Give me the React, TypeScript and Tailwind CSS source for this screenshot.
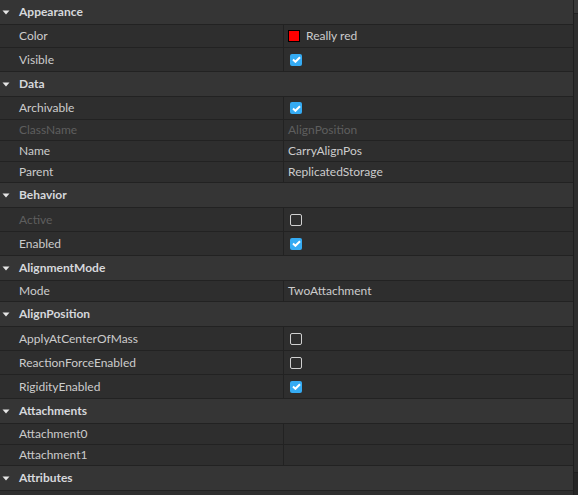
import React from 'react';

type Row =
  | { kind: 'header'; label: string }
  | { kind: 'check'; label: string; checked: boolean; disabled?: boolean; compact?: boolean }
  | { kind: 'text'; label: string; value: string; disabled?: boolean }
  | { kind: 'color'; label: string; value: string; swatch: string };

const rows: Row[] = [
  { kind: 'header', label: 'Appearance' },
  { kind: 'color', label: 'Color', value: 'Really red', swatch: '#ff0000' },
  { kind: 'check', label: 'Visible', checked: true },
  { kind: 'header', label: 'Data' },
  { kind: 'check', label: 'Archivable', checked: true, compact: true },
  { kind: 'text', label: 'ClassName', value: 'AlignPosition', disabled: true },
  { kind: 'text', label: 'Name', value: 'CarryAlignPos' },
  { kind: 'text', label: 'Parent', value: 'ReplicatedStorage' },
  { kind: 'header', label: 'Behavior' },
  { kind: 'check', label: 'Active', checked: false, disabled: true },
  { kind: 'check', label: 'Enabled', checked: true },
  { kind: 'header', label: 'AlignmentMode' },
  { kind: 'text', label: 'Mode', value: 'TwoAttachment' },
  { kind: 'header', label: 'AlignPosition' },
  { kind: 'check', label: 'ApplyAtCenterOfMass', checked: false },
  { kind: 'check', label: 'ReactionForceEnabled', checked: false },
  { kind: 'check', label: 'RigidityEnabled', checked: true },
  { kind: 'header', label: 'Attachments' },
  { kind: 'text', label: 'Attachment0', value: '' },
  { kind: 'text', label: 'Attachment1', value: '' },
  { kind: 'header', label: 'Attributes' },
];

const Checkbox = ({ checked }: { checked: boolean }) =>
  checked ? (
    <div className="ml-[2px] w-[12px] h-[12px] rounded-[2px] bg-[#35abf3] flex items-center justify-center">
      <svg width="9" height="7" viewBox="0 0 9 7">
        <path d="M1 3.6 L3.4 5.8 L8 1.2" fill="none" stroke="#ffffff" strokeWidth="2" />
      </svg>
    </div>
  ) : (
    <div className="ml-[2px] w-[12px] h-[12px] rounded-[2px] border-[1.5px] border-[#d0d0d0]" />
  );

const PropertyRow = ({ row }: { row: Row }) => {
  if (row.kind === 'header') {
    return (
      <div className="h-[25px] flex items-center bg-[#353535] border-b border-[#222222]">
        <svg width="19" height="5" viewBox="0 0 19 5" className="shrink-0">
          <path d="M2.5 0.5 L9.5 0.5 L6 4.5 Z" fill="#e6e6e6" />
        </svg>
        <span className="font-bold text-[#d6d8dc]">{row.label}</span>
      </div>
    );
  }

  const disabled = 'disabled' in row && row.disabled;
  let height = 'h-[24px]';
  if (row.kind === 'text') height = 'h-[21px]';
  if (row.kind === 'color' || (row.kind === 'check' && row.compact)) height = 'h-[23px]';

  return (
    <div className={`${height} flex bg-[#2e2e2e] border-b border-[#222222]`}>
      <div
        className={`w-[284px] shrink-0 flex items-center pl-[19px] border-r border-[#222222] ${
          disabled ? 'text-[#5e5e5e]' : 'text-[#cccccc]'
        }`}
      >
        {row.label}
      </div>
      <div className="flex-1 flex items-center pl-[4px]">
        {row.kind === 'check' && <Checkbox checked={row.checked} />}
        {row.kind === 'color' && (
          <>
            <div className="w-[12px] h-[12px] border border-black" style={{ backgroundColor: row.swatch }} />
            <span className="ml-[6px] text-[#cccccc]">{row.value}</span>
          </>
        )}
        {row.kind === 'text' && (
          <span className={disabled ? 'text-[#5e5e5e]' : 'text-[#cccccc]'}>{row.value}</span>
        )}
      </div>
    </div>
  );
};

export default function App() {
  return (
    <div
      className="w-[578px] h-[495px] flex bg-[#2e2e2e] overflow-hidden text-[12px]"
      style={{ fontFamily: 'Lato, "Noto Sans", sans-serif' }}
    >
      <div className="flex-1 flex flex-col">
        {rows.map((row, i) => (
          <PropertyRow key={i} row={row} />
        ))}
      </div>

      {/* Scrollbar */}
      <div className="w-[5px] flex flex-col border-l border-[#1f1f1f] bg-[#2b2b2b]">
        <div className="h-[14px] bg-[#3a3a3a] border-b border-[#222222]" />
        <div className="flex-1 bg-[#2e2e2e]" />
        <div className="h-[23px] bg-[#262626] border-t border-[#1f1f1f]" />
      </div>
    </div>
  );
}
